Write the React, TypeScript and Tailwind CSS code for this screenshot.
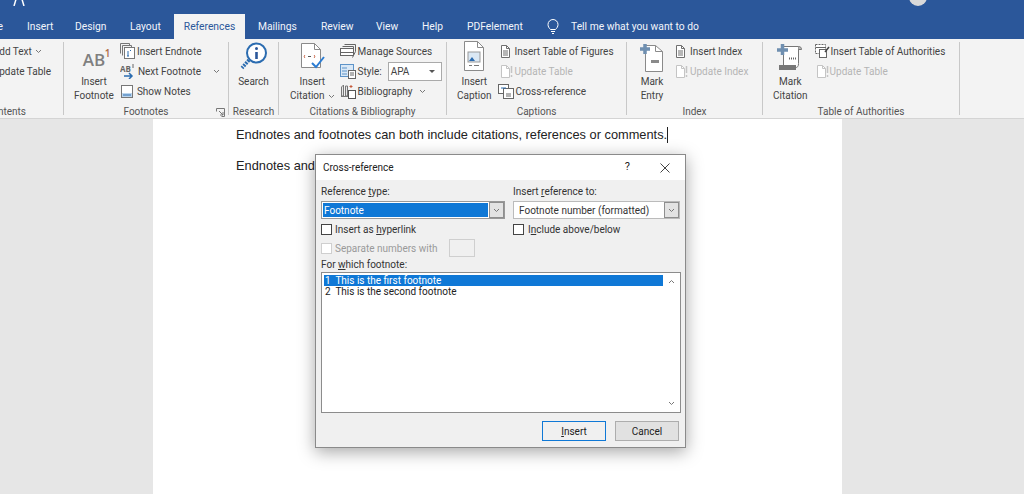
import type { ReactNode } from "react";

const tabs = [
  { label: "Insert", width: "w-[48px]" },
  { label: "Design", width: "w-[55px]" },
  { label: "Layout", width: "w-[44px]" },
];

const tabsAfter = [
  { label: "Mailings", width: "w-[63px]" },
  { label: "Review", width: "w-[55px]" },
  { label: "View", width: "w-[46px]" },
  { label: "Help", width: "w-[45px]" },
  { label: "PDFelement", width: "w-[80px]" },
];

function PageIcon({ disabled }: { disabled?: boolean }) {
  const c = disabled ? "#c4c4c4" : "#6f6f6f";
  return (
    <svg width="15" height="15" viewBox="0 0 15 15" fill="none" stroke={c}>
      <path d="M3.5 1.5h5l3 3v9h-8z" fill="#fff" />
      <path d="M8.5 1.5v3h3" />
      {disabled ? (
        <path d="M13.5 2v7M13.5 11v2" stroke="#c4c4c4" strokeWidth="1.5" />
      ) : (
        <path d="M5 7h5M5 9h5M5 11h5" />
      )}
    </svg>
  );
}

function EndnoteIcon() {
  return (
    <svg width="15" height="16" viewBox="0 0 15 16" fill="none" stroke="#777">
      <path d="M.5.5h9v2M2.5 2.5h9v2" />
      <path d="M.5.5v10M2.5 2.5v10" />
      <rect x="4.5" y="4.5" width="10" height="11" fill="#fff" />
      <path d="M8 8v5M7 13h2M10 7l1 1" stroke="#2b6cb0" />
    </svg>
  );
}

function NextFootnoteIcon() {
  return (
    <svg width="16" height="16" viewBox="0 0 16 16" fill="none">
      <text x="0" y="9" fontSize="8" fontWeight="700" fill="#666" fontFamily="Open Sans, sans-serif">
        AB
      </text>
      <path d="M13 1v4" stroke="#666" />
      <path d="M4 13h8M9 10l3 3-3 3" stroke="#2b6cb0" strokeWidth="1.5" />
    </svg>
  );
}

function ShowNotesIcon() {
  return (
    <svg width="15" height="15" viewBox="0 0 15 15" fill="none">
      <rect x="1.5" y="1.5" width="11" height="12" fill="#fff" stroke="#777" />
      <rect x="2" y="9" width="10" height="4" fill="#bcd6ee" />
      <path d="M3 11h8" stroke="#2b6cb0" />
    </svg>
  );
}

function SearchIcon() {
  return (
    <svg width="28" height="30" viewBox="0 0 28 30" fill="none">
      <circle cx="16.5" cy="11" r="9.5" fill="#fff" stroke="#2b6cb0" strokeWidth="2" />
      <path d="M9 18 2 26" stroke="#2b6cb0" strokeWidth="3.5" strokeDasharray="2 1" />
      <circle cx="16.5" cy="6.5" r="1.5" fill="#2b579a" />
      <path d="M16.5 10v7" stroke="#2b579a" strokeWidth="2.6" />
    </svg>
  );
}

function CitationIcon() {
  return (
    <svg width="28" height="30" viewBox="0 0 28 30" fill="none">
      <path d="M3.5 1.5h13l6 6v18h-19z" fill="#fff" stroke="#8a8a8a" />
      <path d="M16.5 1.5v6h6" stroke="#8a8a8a" />
      <path d="M7 13c-1 1-1 2 0 3M16 13c1 1 1 2 0 3" stroke="#c55a3a" />
      <path d="M10 14.5h3" stroke="#555" />
      <path d="m14 21 4 4 8-10" stroke="#2b7cd3" strokeWidth="2" />
    </svg>
  );
}

function ManageIcon() {
  return (
    <svg width="17" height="16" viewBox="0 0 17 16" fill="none" stroke="#666">
      <path d="M4.500 1.500h11v7M2.500 3.500h11v4" />
      <rect x=".5" y="5.500" width="13" height="7" fill="#fff" />
      <path d="M.5 9.500h13M15.500 8.500l-3 6" />
    </svg>
  );
}

function StyleIcon() {
  return (
    <svg width="17" height="16" viewBox="0 0 17 16" fill="none">
      <rect x=".5" y="1.500" width="13" height="12" fill="#d9e8f6" stroke="#5d93c8" />
      <path d="M2 5h5M2 8h5M2 11h5" stroke="#5d93c8" />
      <rect x="8.500" y="7.500" width="7" height="8" fill="#fff" stroke="#666" />
      <path d="M10 10h4M10 12h4" stroke="#666" />
    </svg>
  );
}

function BiblioIcon() {
  return (
    <svg width="17" height="16" viewBox="0 0 17 16" fill="none" stroke="#777">
      <path d="M1.500 13V4l2-2v11zM5.500 13V3h2v10z" fill="#e8e8e8" />
      <path d="M1 13.500h8" />
      <rect x="8.500" y="7.500" width="7" height="8" fill="#fff" stroke="#555" />
      <path d="M11 2v3M9.500 3.500h3" stroke="#c55a3a" />
    </svg>
  );
}

function CaptionIcon() {
  return (
    <svg width="26" height="32" viewBox="0 0 26 32" fill="none">
      <path d="M3.500 1.500h13l6 6v23h-19z" fill="#fff" stroke="#8a8a8a" />
      <path d="M16.500 1.500v6h6" stroke="#8a8a8a" />
      <rect x="7" y="12" width="12" height="10" fill="#dbe8f4" stroke="#999" />
      <path d="m8 21 3-4 3 4z" fill="#2b6cb0" />
      <path d="M8 25.500h3M13 25.500h5" stroke="#777" />
    </svg>
  );
}

function CrossRefIcon() {
  return (
    <svg width="16" height="16" viewBox="0 0 16 16" fill="none" stroke="#666">
      <rect x=".5" y="1.500" width="10" height="9" fill="#fff" />
      <rect x="5.500" y="5.500" width="10" height="10" fill="#fff" />
      <path d="M3 5h5" stroke="#2b6cb0" />
      <path d="M8 11h5M8 13h5" />
    </svg>
  );
}

function MarkEntryIcon() {
  return (
    <svg width="26" height="30" viewBox="0 0 26 30" fill="none">
      <path d="M6.500 3.500h10l7 6v20h-17z" fill="#fff" stroke="#8a8a8a" />
      <path d="M16.500 3.500v6h7" stroke="#8a8a8a" />
      <path d="M12 19.500h8" stroke="#8a8a8a" strokeWidth="3" />
      <path d="M1 7h10M6 2v10" stroke="#6f8fb0" strokeWidth="3.500" />
    </svg>
  );
}

function MarkCitationIcon() {
  return (
    <svg width="28" height="30" viewBox="0 0 28 30" fill="none">
      <path d="M7.500 4.500h15v17c0 3-1 4-3 4h-12z" fill="#fff" stroke="#777" />
      <path d="M22.500 4.500c2 0 3 1 3 3h-3" fill="#bbb" stroke="#777" />
      <rect x="3" y="23" width="17" height="5" fill="#777" />
      <path d="M13 16.500h7" stroke="#666" strokeDasharray="1 1" strokeWidth="2" />
      <path d="M1 8h11M6.500 2v11" stroke="#6f8fb0" strokeWidth="3.500" />
    </svg>
  );
}

function AuthoritiesIcon() {
  return (
    <svg width="16" height="16" viewBox="0 0 16 16" fill="none" stroke="#666">
      <rect x="1.500" y="1.500" width="10" height="9" fill="#fff" strokeDasharray="2 1" />
      <path d="M1.500 4.500h10" />
      <rect x="5.500" y="6.500" width="7" height="8" fill="#fff" />
      <path d="m15 4-4 5" stroke="#444" strokeWidth="1.500" />
    </svg>
  );
}

function Chevron({ className = "" }: { className?: string }) {
  return (
    <svg width="7" height="5" viewBox="0 0 7 5" fill="none" stroke="#777" className={className}>
      <path d="m1 1 2.500 2.500L6 1" />
    </svg>
  );
}

function SmallItem({
  icon,
  label,
  disabled,
  gap = "gap-[2px]",
  children,
}: {
  icon?: ReactNode;
  label: string;
  disabled?: boolean;
  gap?: string;
  children?: ReactNode;
}) {
  return (
    <div className={`flex h-5 items-center whitespace-nowrap ${gap} ${disabled ? "text-[#b5b5b5]" : "text-[#444]"}`}>
      {icon}
      <span>{label}</span>
      {children}
    </div>
  );
}

function LargeButton({ icon, lines, chevron }: { icon: ReactNode; lines: string[]; chevron?: boolean }) {
  return (
    <div className="flex flex-col items-center whitespace-nowrap leading-[14px] text-[#444]">
      <div className="mb-[3px] flex h-[30px] items-end">{icon}</div>
      {lines.map((line, i) => (
        <div key={line} className="flex items-center gap-[3px]">
          {line}
          {chevron && i === lines.length - 1 && <Chevron />}
        </div>
      ))}
    </div>
  );
}

function Group({
  label,
  width,
  pad,
  children,
  launcher,
}: {
  label: string;
  width: string;
  pad: string;
  children: ReactNode;
  launcher?: boolean;
}) {
  return (
    <div className={`relative my-[3px] flex shrink-0 flex-col border-r border-[#c8c8c8] ${width}`}>
      <div className={`flex h-[63px] shrink-0 ${pad}`}>{children}</div>
      <div className="mb-[-4px] h-[14px] text-center leading-[14px] text-[#555]">{label}</div>
      {launcher && (
        <svg width="9" height="9" viewBox="0 0 9 9" fill="none" stroke="#777" className="absolute bottom-[-2px] right-[3px]">
          <path d="M.5 3.500v-3h8v8h-3M3 3l4 4M7 4v3H4" />
        </svg>
      )}
    </div>
  );
}

function Checkbox({ disabled }: { disabled?: boolean }) {
  return <span className={`h-[11px] w-[11px] shrink-0 border bg-white ${disabled ? "border-[#cfcfcf]" : "border-[#444]"}`} />;
}

function ComboArrow() {
  return (
    <span className="flex w-[15px] items-center justify-center self-stretch border border-[#8f8f8f] bg-[#e3e3e3]">
      <Chevron />
    </span>
  );
}

export default function App() {
  return (
    <div className="relative h-[494px] w-[1024px] overflow-hidden bg-[#e6e6e6] font-['Roboto',sans-serif] text-[10px]">
      <header className="relative h-[39px] bg-[#2b579a]">
        <div className="absolute left-[13px] top-[-4px]">
          <svg width="12" height="10" viewBox="0 0 12 10" fill="none" stroke="#fff" strokeWidth="1.500">
            <path d="M1 10 4 0M11 10 8 0" />
          </svg>
        </div>
        <div className="absolute left-[384px] top-[-12px] text-[11px] text-[#e8eef7]">Document2 - Word</div>
        <div className="absolute left-[909px] top-[-12px] h-[18px] w-[18px] rounded-full bg-[#d9d9d9]" />
        <nav className="absolute bottom-0 left-0 flex h-[25px] items-center text-[10.3px] text-[#f2f5fa]">
          <div className="ml-[-27px] w-[54px] pr-[24px] text-right">File</div>
          {tabs.map((t) => (
            <div key={t.label} className={t.width}>
              {t.label}
            </div>
          ))}
          <div className="flex h-[25px] w-[71px] items-center justify-center bg-[#f3f3f3] text-[#2b579a]">References</div>
          <div className="flex items-center pl-[13px]">
            {tabsAfter.map((t) => (
              <div key={t.label} className={t.width}>
                {t.label}
              </div>
            ))}
            <div className="flex items-center gap-[12px]">
              <svg width="12" height="17" viewBox="0 0 12 17" fill="none" stroke="#fff">
                <path d="M3.500 11.500C2 10 1 8.500 1 6.500a5 5 0 0 1 10 0c0 2-1 3.500-2.500 5zM4 13.500h4M5 15.500h2" />
              </svg>
              <span>Tell me what you want to do</span>
            </div>
          </div>
        </nav>
      </header>

      <section className="flex h-[80px] overflow-hidden border-b border-[#d4d4d4] bg-[#f3f3f3]">
        <div className="relative my-[3px] flex w-[64px] shrink-0 flex-col items-end overflow-hidden border-r border-[#c8c8c8]">
          <div className="-mt-px h-[64px] shrink-0 pr-[12px] text-[#444]">
            <SmallItem label="Add Text" gap="gap-[3px]">
              <Chevron />
            </SmallItem>
            <SmallItem label="Update Table" />
          </div>
          <div className="mb-[-4px] h-[14px] whitespace-nowrap pr-[37px] leading-[14px] text-[#555]">Table of Contents</div>
        </div>

        <Group label="Footnotes" width="w-[165px]" pad="pl-[10px] gap-[6px]" launcher>
          <LargeButton
            lines={["Insert", "Footnote"]}
            icon={
              <span className="relative pb-[2px] font-['Open_Sans',sans-serif] text-[17px] font-semibold leading-[20px] text-[#7f7f7f]">
                AB<span className="absolute left-[22px] top-[-7px] text-[10px] text-[#b06b45]">1</span>
              </span>
            }
          />
          <div className="-mt-px flex-1 pr-[10px]">
            <SmallItem icon={<EndnoteIcon />} label="Insert Endnote" />
            <SmallItem icon={<NextFootnoteIcon />} label="Next Footnote">
              <Chevron className="ml-[10px]" />
            </SmallItem>
            <SmallItem icon={<ShowNotesIcon />} label="Show Notes" />
          </div>
        </Group>

        <Group label="Research" width="w-[50px]" pad="justify-center">
          <LargeButton lines={["Search"]} icon={<SearchIcon />} />
        </Group>

        <Group label="Citations & Bibliography" width="w-[168px]" pad="pl-[11px] gap-[5px]">
          <LargeButton lines={["Insert", "Citation"]} chevron icon={<CitationIcon />} />
          <div className="-mt-px">
            <SmallItem icon={<ManageIcon />} label="Manage Sources" gap="gap-[1px]" />
            <SmallItem icon={<StyleIcon />} label="Style:" gap="gap-[1px]">
              <span className="ml-[5px] flex h-[19px] w-[54px] items-center justify-between border border-[#aaa] bg-white pl-[2px] pr-[6px]">
                APA
                <span className="h-0 w-0 border-x-[3px] border-t-[3px] border-x-transparent border-t-[#555]" />
              </span>
            </SmallItem>
            <SmallItem icon={<BiblioIcon />} label="Bibliography" gap="gap-[1px]">
              <Chevron className="ml-[5px]" />
            </SmallItem>
          </div>
        </Group>

        <Group label="Captions" width="w-[180px]" pad="pl-[10px] gap-[6px]">
          <LargeButton lines={["Insert", "Caption"]} icon={<CaptionIcon />} />
          <div className="-mt-px">
            <SmallItem icon={<PageIcon />} label="Insert Table of Figures" />
            <SmallItem icon={<PageIcon disabled />} label="Update Table" disabled />
            <SmallItem icon={<CrossRefIcon />} label="Cross-reference" />
          </div>
        </Group>

        <Group label="Index" width="w-[136px]" pad="pl-[12px] gap-[8px]">
          <LargeButton lines={["Mark", "Entry"]} icon={<MarkEntryIcon />} />
          <div className="-mt-px">
            <SmallItem icon={<PageIcon />} label="Insert Index" />
            <SmallItem icon={<PageIcon disabled />} label="Update Index" disabled />
          </div>
        </Group>

        <Group label="Table of Authorities" width="w-[197px]" pad="pl-[10px] gap-[6px]">
          <LargeButton lines={["Mark", "Citation"]} icon={<MarkCitationIcon />} />
          <div className="-mt-px">
            <SmallItem icon={<AuthoritiesIcon />} label="Insert Table of Authorities" gap="gap-[1px]" />
            <SmallItem icon={<PageIcon disabled />} label="Update Table" disabled gap="gap-[1px]" />
          </div>
        </Group>
      </section>

      <main className="ml-[153px] h-[375px] w-[689px] bg-white pl-[83px] pt-[7px] font-['Liberation_Sans',sans-serif] text-[12.8px] leading-[17px] text-[#222]">
        <p className="flex items-center">
          Endnotes and footnotes can both include citations, references or comments.
          <span className="h-[16px] w-px bg-[#222]" />
        </p>
        <p className="mt-[14px]">Endnotes and footnotes</p>
      </main>

      <div className="absolute left-[315px] top-[154px] flex h-[294px] w-[371px] flex-col border border-[#8a8a8a] bg-[#f0f0f0] text-[10px] text-[#333] shadow-[0_4px_16px_rgba(0,0,0,0.35)]">
        <div className="flex h-[25px] shrink-0 items-center justify-between bg-white pl-[7px] pr-[15px] text-[#222]">
          <span>Cross-reference</span>
          <div className="flex items-center gap-[30px]">
            <span className="text-[11px]">?</span>
            <svg width="10" height="10" viewBox="0 0 10 10" stroke="#444" fill="none">
              <path d="m.5.5 9 9M9.500.5l-9 9" />
            </svg>
          </div>
        </div>

        <div className="flex flex-1 flex-col px-[5px] pt-[5px]">
          <div className="flex gap-[8px]">
            <div className="w-[184px]">
              <div className="h-[14px] leading-[14px]">
                Reference <span className="underline">t</span>ype:
              </div>
              <div className="mt-[2px] flex h-[18px] items-stretch border border-[#999] bg-white">
                <div className="m-[1px] flex flex-1 items-center bg-[#0f78d6] pl-[1px] text-white">Footnote</div>
                <ComboArrow />
              </div>
            </div>
            <div className="w-[167px]">
              <div className="h-[14px] leading-[14px]">
                Insert <span className="underline">r</span>eference to:
              </div>
              <div className="mt-[2px] flex h-[18px] items-stretch justify-between border border-[#bbb] bg-white">
                <div className="flex items-center pl-[5px]">Footnote number (formatted)</div>
                <ComboArrow />
              </div>
            </div>
          </div>

          <div className="mt-[4px] flex h-[13px] gap-[8px]">
            <label className="flex w-[184px] items-center gap-[3px]">
              <Checkbox />
              <span>
                Insert as <span className="underline">h</span>yperlink
              </span>
            </label>
            <label className="flex items-center gap-[4px]">
              <Checkbox />
              <span>
                I<span className="underline">n</span>clude above/below
              </span>
            </label>
          </div>

          <div className="mt-[3px] flex h-[18px] items-center gap-[3px] whitespace-nowrap text-[#9a9a9a]">
            <Checkbox disabled />
            <span className="w-[111px]">Separate numbers with</span>
            <span className="h-[18px] w-[26px] border border-[#cfcfcf] bg-[#f0f0f0]" />
          </div>

          <div className="mt-[1px] h-[14px] leading-[14px]">
            For <span className="underline">w</span>hich footnote:
          </div>

          <div className="flex h-[141px] w-[360px] border border-[#8c8c8c] bg-white p-[2px] pr-0">
            <div className="flex-1 leading-[11px]">
              <div className="h-[11px] bg-[#0f78d6] pl-[1px] text-white">1&nbsp; This is the first footnote</div>
              <div className="h-[11px] pl-[1px] text-[#222]">2&nbsp; This is the second footnote</div>
            </div>
            <div className="flex w-[17px] flex-col items-center justify-between py-[4px]">
              <Chevron className="rotate-180" />
              <Chevron />
            </div>
          </div>

          <div className="mt-[8px] flex justify-end gap-[9px] pr-[1px]">
            <button className="h-[20px] w-[64px] border border-[#0f78d6] bg-[#f0f0f0] text-[#222]">
              <span className="underline">I</span>nsert
            </button>
            <button className="h-[20px] w-[64px] border border-[#adadad] bg-[#e1e1e1] text-[#222]">Cancel</button>
          </div>
        </div>
      </div>
    </div>
  );
}
